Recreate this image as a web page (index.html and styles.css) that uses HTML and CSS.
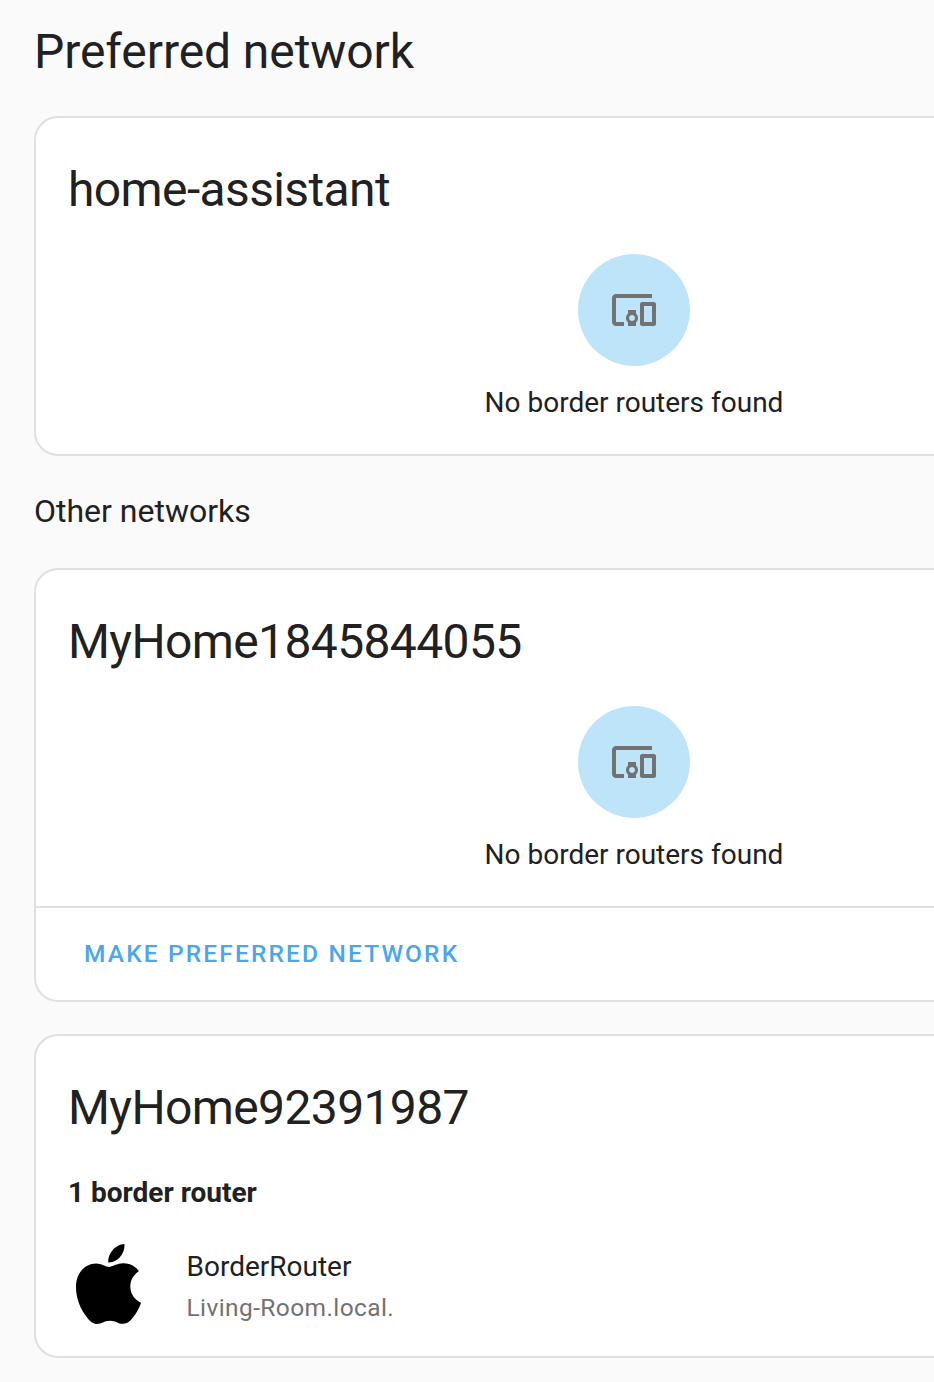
FILE: index.html
```
<!DOCTYPE html>
<html lang="en">
<head>
  <meta charset="UTF-8">
  <meta name="viewport" content="width=device-width, initial-scale=1.0">
  <title>Thread networks</title>
  <link rel="stylesheet" href="styles.css">
</head>
<body>
  <div class="container">
    <h1>Preferred network</h1>
    <div class="card">
      <h2>home-assistant</h2>
      <div class="no-routers">
        <div class="icon-circle">
          <svg viewBox="0 0 24 24"><path d="M3 6H21V4H3C1.9 4 1 4.9 1 6V18C1 19.1 1.9 20 3 20H7V18H3V6M13 12H9V13.78C8.39 14.33 8 15.11 8 16C8 16.89 8.39 17.67 9 18.22V20H13V18.22C13.61 17.67 14 16.88 14 16S13.61 14.33 13 13.78V12M11 17.5C10.17 17.5 9.5 16.83 9.5 16S10.17 14.5 11 14.5 12.5 15.17 12.5 16 11.83 17.5 11 17.5M22 8H16C15.5 8 15 8.5 15 9V19C15 19.5 15.5 20 16 20H22C22.5 20 23 19.5 23 19V9C23 8.5 22.5 8 22 8M21 18H17V10H21V18Z"/></svg>
        </div>
        <p>No border routers found</p>
      </div>
    </div>

    <h3>Other networks</h3>
    <div class="card">
      <h2>MyHome1845844055</h2>
      <div class="no-routers">
        <div class="icon-circle">
          <svg viewBox="0 0 24 24"><path d="M3 6H21V4H3C1.9 4 1 4.9 1 6V18C1 19.1 1.9 20 3 20H7V18H3V6M13 12H9V13.78C8.39 14.33 8 15.11 8 16C8 16.89 8.39 17.67 9 18.22V20H13V18.22C13.61 17.67 14 16.88 14 16S13.61 14.33 13 13.78V12M11 17.5C10.17 17.5 9.5 16.83 9.5 16S10.17 14.5 11 14.5 12.5 15.17 12.5 16 11.83 17.5 11 17.5M22 8H16C15.5 8 15 8.5 15 9V19C15 19.5 15.5 20 16 20H22C22.5 20 23 19.5 23 19V9C23 8.5 22.5 8 22 8M21 18H17V10H21V18Z"/></svg>
        </div>
        <p>No border routers found</p>
      </div>
      <div class="card-actions">
        <button>Make preferred network</button>
      </div>
    </div>

    <div class="card">
      <h2>MyHome92391987</h2>
      <h4>1 border router</h4>
      <div class="router">
        <svg class="router-logo" viewBox="0 0 814 1000"><path d="M788.1 340.9c-5.8 4.5-108.2 62.2-108.2 190.5 0 148.4 130.3 200.9 134.2 202.2-.6 3.2-20.7 71.9-68.7 141.9-42.8 61.6-87.5 123.1-155.5 123.1s-85.5-39.5-164-39.5c-76.5 0-103.7 40.8-165.9 40.8s-105.6-57-155.5-127C46.7 790.7 0 663 0 541.8c0-194.4 126.4-297.5 250.8-297.5 66.1 0 121.2 43.4 162.7 43.4 39.5 0 101.1-46 176.3-46 28.5 0 130.9 2.6 198.3 99.2zm-234-181.5c31.1-36.9 53.1-88.1 53.1-139.3 0-7.1-.6-14.3-1.9-20.1-50.6 1.9-110.8 33.7-147.1 75.8-28.5 32.4-55.1 83.6-55.1 135.5 0 7.8 1.3 15.6 1.9 18.1 3.2.6 8.4 1.3 13.6 1.3 45.4 0 102.5-30.4 135.5-71.3z"/></svg>
        <div class="router-text">
          <div class="router-name">BorderRouter</div>
          <div class="router-host">Living-Room.local.</div>
        </div>
      </div>
    </div>
  </div>
</body>
</html>
```

FILE: styles.css
```
body {
  font-family: Roboto, sans-serif;
  background-color: #fafafa;
  color: #212121;
  margin: 0;
}

.container {
  padding-left: 34px;
}

h1,
h2,
h3,
h4,
p {
  margin: 0;
  font-weight: 400;
}

h1 {
  padding: 20px 0 32px;
  font-size: 48px;
  line-height: 64px;
  letter-spacing: -0.08px;
}

h2 {
  padding: 40px 32px 32px;
  font-size: 48px;
  line-height: 64px;
  letter-spacing: -0.62px;
}

h3 {
  padding-bottom: 34px;
  font-size: 32px;
  line-height: 46px;
}

h4 {
  padding: 1px 32px 0;
  font-size: 28px;
  line-height: 40px;
  font-weight: 700;
}

.card {
  background-color: #fff;
  border: 2px solid #e0e0e0;
  border-right: none;
  border-radius: 24px 0 0 24px;
  margin-bottom: 32px;
}

.card:last-child {
  margin-bottom: 0;
}

.no-routers {
  display: flex;
  flex-direction: column;
  align-items: center;
  padding: 0 0 31px 298px;
}

.no-routers p {
  padding-top: 17px;
  font-size: 28px;
  line-height: 40px;
}

.icon-circle {
  display: flex;
  align-items: center;
  justify-content: center;
  width: 112px;
  height: 112px;
  border-radius: 50%;
  background-color: #bee4f9;
}

.icon-circle svg {
  width: 48px;
  height: 48px;
  fill: #727272;
}

.card-actions {
  border-top: 2px solid #e0e0e0;
  padding: 10px 16px;
}

.card-actions button {
  height: 72px;
  padding: 0 32px 2px;
  background: none;
  border: none;
  color: #4ba6ef;
  font: 500 24.5px Roboto, sans-serif;
  letter-spacing: 2.14px;
  text-transform: uppercase;
  cursor: pointer;
}

.router {
  display: flex;
  align-items: flex-start;
  padding: 31px 40px;
}

.router-logo {
  width: 65px;
  height: 80px;
  margin-right: 45.5px;
}

.router-name {
  font-size: 28px;
  line-height: 46px;
}

.router-host {
  padding-top: 1px;
  color: #727272;
  font-size: 24.5px;
  line-height: 34px;
  letter-spacing: 0.4px;
}
```
